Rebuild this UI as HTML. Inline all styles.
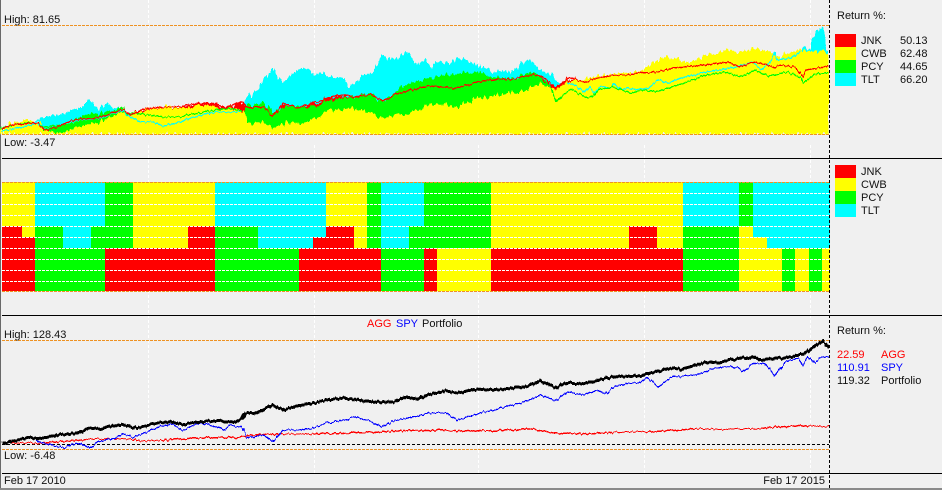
<!DOCTYPE html>
<html><head><meta charset="utf-8"><style>
html,body{margin:0;padding:0;background:#f0f0f0;width:942px;height:490px;overflow:hidden}
svg{display:block}
text{font-family:"Liberation Sans",sans-serif;font-size:11px;fill:#111}
.o{stroke:#ee9222;stroke-width:1;stroke-dasharray:3 1;fill:none}
.w{stroke:#fff;stroke-width:1;stroke-dasharray:3 2;fill:none}
.h{stroke:#fff;stroke-width:1;stroke-dasharray:3 1;fill:none}
.k{stroke:#000;stroke-width:1;fill:none}
.d{stroke:#000;stroke-width:1;stroke-dasharray:3 2;fill:none}
polyline{fill:none;stroke-linejoin:bevel}
</style></head><body>
<svg width="942" height="490" viewBox="0 0 942 490" shape-rendering="crispEdges" xmlns="http://www.w3.org/2000/svg">
<defs>
<filter id="j" x="-2%" y="-10%" width="104%" height="120%" color-interpolation-filters="sRGB"><feTurbulence type="fractalNoise" baseFrequency=".35 .015" numOctaves="2" seed="4"/><feDisplacementMap in="SourceGraphic" scale="9" xChannelSelector="G" yChannelSelector="R"/></filter>
<filter id="m" x="-2%" y="-10%" width="104%" height="120%" color-interpolation-filters="sRGB"><feTurbulence type="fractalNoise" baseFrequency=".4 .015" numOctaves="2" seed="9"/><feDisplacementMap in="SourceGraphic" scale="4" xChannelSelector="G" yChannelSelector="R"/></filter>
</defs>
<rect width="942" height="490" fill="#f0f0f0"/>
<rect x="0" y="0" width="1" height="490" fill="#696969"/>
<rect x="0" y="488" width="942" height="2" fill="#8a8a8a"/>
<!-- vertical white grid -->
<g class="w"><path d="M148.5 0V473M314.5 0V473M478.5 0V473M644.5 0V473M810.5 0V473"/></g>

<!-- PANEL 1 -->
<g filter="url(#j)">
<polygon fill="#0ff" points="2,134 2,131 17,128 33,125 37,120 43,117 50,116 60,115 72,110 82,108 90,99 98,108 107,103 115,108 122,108 127,115 140,122 153,122 163,126 177,123 200,115 217,112 230,112 240,112 245,100 257,90 272,68 283,83 297,70 308,68 314,75 319,72 331,77 344,77 349,87 356,82 364,75 374,72 382,55 391,60 399,57 407,52 414,62 419,65 426,57 431,68 436,62 451,63 456,58 467,60 477,65 482,68 489,68 492,73 504,70 511,73 521,63 532,60 539,70 551,74 554,78 559,82 567,83 577,87 584,93 589,87 594,93 601,86 611,88 614,83 622,90 628,88 638,90 648,88 658,80 668,83 681,78 695,75 705,72 725,69 736,67 753,62 761,70 770,62 775,53 776,60 791,58 800,52 803,45 810,50 811,38 821,28 825,37 829,52 829,134"/>
<polygon fill="#f00" points="2,134 2,129 10,125 37,123 45,130 57,127 73,120 97,118 113,113 123,109 130,115 143,110 163,107 180,107 200,103 217,104 225,108 242,102 248,108 263,107 273,117 283,103 297,108 307,105 314,102 319,102 327,98 341,95 354,97 371,94 382,101 396,94 407,91 429,86 457,88 474,83 487,80 514,79 534,74 544,78 556,88 569,78 577,80 584,83 597,78 614,75 628,75 638,73 658,72 673,68 705,65 728,62 740,67 753,62 768,65 775,68 778,65 795,67 803,77 806,70 829,66 829,134"/>
<polygon fill="#0f0" points="2,134 2,128 13,125 27,123 37,123 43,127 63,125 80,117 97,113 113,110 123,107 128,115 133,113 147,115 163,117 180,117 197,113 217,110 230,108 243,112 248,106 263,103 273,112 287,105 300,107 314,106 324,102 342,97 357,97 372,94 382,101 394,93 404,85 427,79 444,75 461,73 479,72 491,77 514,79 521,75 534,72 544,80 551,88 557,102 562,95 571,90 584,97 592,98 599,89 614,87 628,92 631,93 645,90 658,92 671,87 688,82 705,75 725,72 741,77 755,70 768,76 788,72 801,78 803,83 815,74 829,73 829,134"/>
<polygon fill="#ff0" points="2,134 2,130 10,124 28,120 37,122 43,128 50,132 63,133 77,127 97,123 113,115 123,112 133,115 147,110 167,107 187,108 200,105 213,106 223,110 233,108 245,112 248,124 263,122 273,128 287,122 300,124 314,119 324,113 331,109 342,110 347,107 357,110 371,113 382,118 394,115 406,115 417,110 431,105 447,105 457,107 467,103 479,98 497,95 511,92 521,92 531,87 541,83 551,88 557,90 569,80 581,80 597,76 614,74 628,73 638,72 653,63 665,57 678,59 686,63 708,55 728,50 741,53 753,48 765,50 778,57 795,50 829,52 829,134"/>
</g>
<rect x="2" y="135" width="828" height="10" fill="#f0f0f0"/>
<g stroke-width="1.3" filter="url(#m)">
<polyline stroke="#0ff" points="2,131 17,128 33,125 37,120 43,128 60,125 80,120 100,118 123,110 127,115 140,122 153,122 163,126 177,123 200,115 217,112 240,112"/>
<polyline stroke="#0ff" points="567,83 577,87 584,93 589,87 594,93 601,86 611,88 614,83 622,90 628,88 638,90 648,88 658,80 668,83 681,78 695,75 705,72 725,69 736,67 753,62 761,70 770,62 775,53 776,60 791,58 800,52"/>
<polyline stroke="#0f0" points="2,128 13,125 27,123 37,123 43,127 63,125"/>
<polyline stroke="#0f0" points="123,107 128,115 133,113 147,115 163,117 180,117 197,113 217,110 230,108 243,112"/>
<polyline stroke="#0f0" points="544,80 551,88 557,102 562,95 571,90 584,97 592,98 599,89 614,87 628,92 631,93 645,90 658,92 671,87 688,82 705,75 725,72 741,77 755,70 768,76 788,72 801,78 803,83 815,74 829,73"/>
<polyline stroke="#f00" points="2,129 10,125 37,123 45,130 57,127 73,120 97,118 113,113 123,109 130,115 143,110 163,107 180,107 200,103 217,104 225,108 242,102 248,108 263,107 273,117 283,103 297,108 307,105 314,102 319,102 327,98 341,95 354,97 371,94 382,101 396,94 407,91 429,86 457,88 474,83 487,80 514,79 534,74 544,78 556,88 569,78 577,80 584,83 597,78 614,75 628,75 638,73 658,72 673,68 705,65 728,62 740,67 753,62 768,65 775,68 778,65 795,67 803,77 806,70 829,66"/>
</g>
<path class="o" d="M2 25.5H829M2 134.5H829"/>
<text x="4" y="23">High: 81.65</text>
<text x="4" y="146">Low: -3.47</text>
<text x="837" y="19">Return %:</text>
<rect x="835" y="34" width="21" height="13" fill="#f00"/><rect x="835" y="47" width="21" height="13" fill="#ff0"/><rect x="835" y="60" width="21" height="13" fill="#0f0"/><rect x="835" y="73" width="21" height="13" fill="#0ff"/>
<text x="861" y="44">JNK</text><text x="900" y="44">50.13</text>
<text x="861" y="57">CWB</text><text x="900" y="57">62.48</text>
<text x="861" y="70">PCY</text><text x="900" y="70">44.65</text>
<text x="861" y="83">TLT</text><text x="900" y="83">66.20</text>

<!-- PANEL 2 -->
<g>
<rect x="2" y="182" width="33" height="44" fill="#ff0"/><rect x="35" y="182" width="70" height="44" fill="#0ff"/><rect x="105" y="182" width="28" height="44" fill="#0f0"/><rect x="133" y="182" width="82" height="44" fill="#ff0"/><rect x="215" y="182" width="111" height="44" fill="#0ff"/><rect x="326" y="182" width="41" height="44" fill="#ff0"/><rect x="367" y="182" width="14" height="44" fill="#0f0"/><rect x="381" y="182" width="43" height="44" fill="#0ff"/><rect x="424" y="182" width="67" height="44" fill="#0f0"/><rect x="491" y="182" width="192" height="44" fill="#ff0"/><rect x="683" y="182" width="56" height="44" fill="#0ff"/><rect x="739" y="182" width="14" height="44" fill="#0f0"/><rect x="753" y="182" width="77" height="44" fill="#0ff"/>
<rect x="2" y="226" width="20" height="11" fill="#f00"/><rect x="22" y="226" width="13" height="11" fill="#ff0"/><rect x="258" y="226" width="68" height="11" fill="#0ff"/><rect x="326" y="226" width="28" height="11" fill="#f00"/><rect x="739" y="226" width="14" height="11" fill="#ff0"/><rect x="753" y="226" width="77" height="11" fill="#0ff"/>
<rect x="2" y="237" width="33" height="11" fill="#f00"/><rect x="258" y="237" width="55" height="11" fill="#0ff"/><rect x="313" y="237" width="41" height="11" fill="#f00"/><rect x="739" y="237" width="28" height="11" fill="#ff0"/><rect x="767" y="237" width="63" height="11" fill="#0ff"/>
<rect x="35" y="226" width="28" height="22" fill="#0f0"/><rect x="63" y="226" width="28" height="22" fill="#0ff"/><rect x="91" y="226" width="42" height="22" fill="#0f0"/><rect x="133" y="226" width="55" height="22" fill="#ff0"/><rect x="188" y="226" width="27" height="22" fill="#f00"/><rect x="215" y="226" width="43" height="22" fill="#0f0"/><rect x="354" y="226" width="13" height="22" fill="#ff0"/><rect x="367" y="226" width="14" height="22" fill="#0f0"/><rect x="381" y="226" width="28" height="22" fill="#0ff"/><rect x="409" y="226" width="82" height="22" fill="#0f0"/><rect x="491" y="226" width="138" height="22" fill="#ff0"/><rect x="629" y="226" width="28" height="22" fill="#f00"/><rect x="657" y="226" width="26" height="22" fill="#ff0"/><rect x="683" y="226" width="56" height="22" fill="#0f0"/>
<rect x="2" y="248" width="33" height="43" fill="#f00"/><rect x="35" y="248" width="70" height="43" fill="#0f0"/><rect x="105" y="248" width="110" height="43" fill="#f00"/><rect x="215" y="248" width="84" height="43" fill="#0f0"/><rect x="299" y="248" width="82" height="43" fill="#f00"/><rect x="381" y="248" width="43" height="43" fill="#0f0"/><rect x="424" y="248" width="13" height="43" fill="#f00"/><rect x="437" y="248" width="54" height="43" fill="#ff0"/><rect x="491" y="248" width="192" height="43" fill="#f00"/><rect x="683" y="248" width="56" height="43" fill="#0f0"/><rect x="739" y="248" width="43" height="43" fill="#ff0"/><rect x="782" y="248" width="13" height="43" fill="#0f0"/><rect x="795" y="248" width="14" height="43" fill="#ff0"/><rect x="809" y="248" width="13" height="43" fill="#0f0"/><rect x="822" y="248" width="8" height="43" fill="#ff0"/>
</g>
<path class="h" d="M2 193.500H829M2 204.500H829M2 215.500H829M2 226.500H829M2 237.500H829M2 248.500H829M2 259.500H829M2 270.500H829M2 281.500H829"/>
<path class="o" d="M2 182.500H829M2 291.500H829"/>
<rect x="835" y="165" width="21" height="13" fill="#f00"/><rect x="835" y="178" width="21" height="13" fill="#ff0"/><rect x="835" y="191" width="21" height="13" fill="#0f0"/><rect x="835" y="204" width="21" height="13" fill="#0ff"/>
<text x="861" y="175">JNK</text><text x="861" y="188">CWB</text><text x="861" y="201">PCY</text><text x="861" y="214">TLT</text>

<!-- PANEL 3 -->
<path class="o" d="M2 340.500H829M2 449.500H829"/>
<path class="d" d="M2 444.500H829"/>
<g filter="url(#m)">
<polyline stroke="#f00" stroke-width="1.4" points="2,443 20,443 40,443 60,442 87,439 113,439 133,439 140,441 163,441 173,439 200,438 240,437 253,435 283,434 314,434 347,433 381,432 414,430 487,431 531,429 557,433 591,434 614,432 628,432 648,432 695,429 738,429 761,429 771,427 811,426 829,426"/>
<polyline stroke="#00f" stroke-width="1.2" points="2,444 17,440 32,437 40,442 53,446 65,448 70,445 80,443 90,448 100,441 113,439 123,434 133,437 147,432 160,427 173,424 182,430 200,423 217,427 223,430 230,425 242,427 247,438 263,435 273,442 283,430 300,430 314,428 327,423 344,420 354,417 364,419 372,422 382,427 394,421 429,413 446,413 457,420 477,414 501,408 524,402 541,395 556,401 567,392 584,395 597,390 606,394 614,387 628,383 638,383 648,378 658,387 671,377 695,375 715,368 738,367 743,372 751,364 765,363 775,376 785,362 798,358 803,365 808,357 815,363 820,358 829,356"/>
<polyline stroke="#000" stroke-width="3" points="2,444 13,441 27,438 43,438 60,435 77,433 88,428 100,429 113,426 123,425 137,428 153,424 170,422 183,424 200,422 217,421 233,422 242,419 245,413 257,413 272,405 283,410 297,406 314,403 327,400 344,398 357,400 376,402 394,402 406,397 417,399 431,394 446,391 457,393 477,389 494,390 524,387 541,381 556,388 567,383 584,384 597,380 614,377 628,376 641,376 655,372 670,368 683,369 705,362 720,363 735,359 753,357 761,360 791,357 805,353 815,346 822,341 829,347"/>
</g>
<text x="4" y="338">High: 128.43</text>
<text x="4" y="459">Low: -6.48</text>
<text x="367" y="327" style="fill:#f00">AGG</text><text x="396" y="327" style="fill:#00f">SPY</text><text x="422" y="327">Portfolio</text>
<text x="837" y="334">Return %:</text>
<text x="837" y="358" style="fill:#f00">22.59</text><text x="881" y="358" style="fill:#f00">AGG</text>
<text x="837" y="371" style="fill:#00f">110.91</text><text x="881" y="371" style="fill:#00f">SPY</text>
<text x="837" y="384">119.32</text><text x="881" y="384">Portfolio</text>
<text x="4" y="484">Feb 17 2010</text>
<text x="825" y="484" text-anchor="end">Feb 17 2015</text>

<!-- frame lines -->
<path class="k" d="M2 158.500H942M2 315.500H942M2 473.500H942"/>
<path class="d" d="M829.500 0V488"/>
</svg>
</body></html>
